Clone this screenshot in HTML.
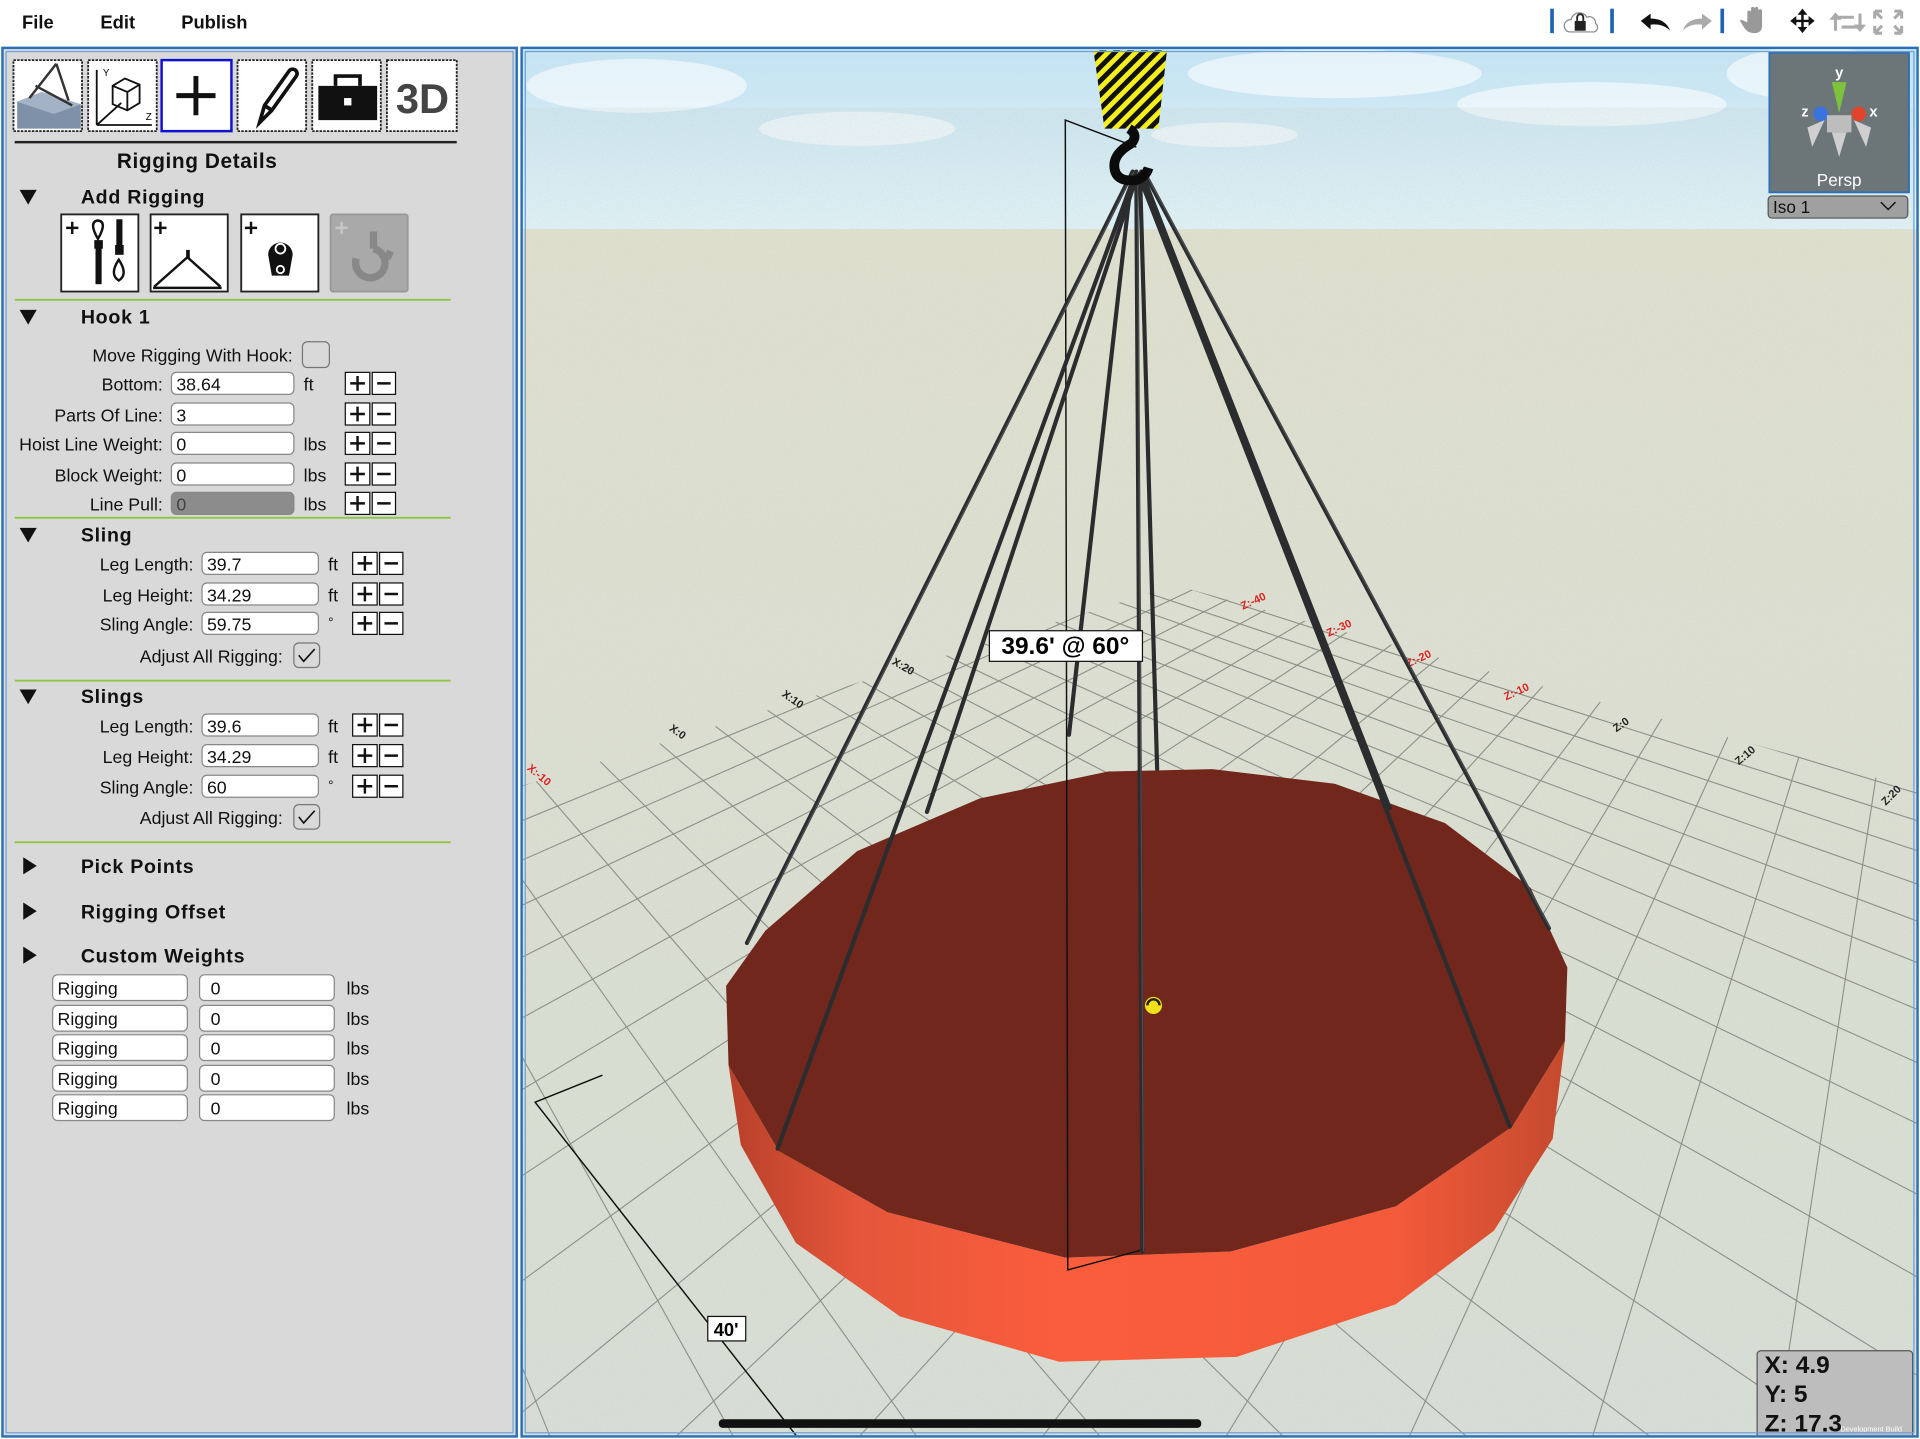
<!DOCTYPE html>
<html><head><meta charset="utf-8"><style>
html,body{margin:0;padding:0;background:#fff;overflow:hidden}
svg{display:block}
text{font-family:"Liberation Sans",Arial,sans-serif}
</style></head><body>
<svg width="1920" height="1439" viewBox="0 0 1568 1175" xmlns="http://www.w3.org/2000/svg">
<defs>
<linearGradient id="sky" x1="0" y1="0" x2="0" y2="1">
<stop offset="0" stop-color="#c4e2f1"/><stop offset="1" stop-color="#e2f5fb"/></linearGradient>
<linearGradient id="gnd" x1="0" y1="0" x2="0" y2="1">
<stop offset="0" stop-color="#e2e2d0"/><stop offset="0.35" stop-color="#dfe2d4"/><stop offset="1" stop-color="#dae1d8"/></linearGradient>
<linearGradient id="side" x1="0" y1="0" x2="1" y2="0">
<stop offset="0" stop-color="#b8402a"/><stop offset="0.15" stop-color="#e4563a"/><stop offset="0.4" stop-color="#fb5d3c"/><stop offset="0.8" stop-color="#f35a3a"/><stop offset="1" stop-color="#c44a2e"/></linearGradient>
<pattern id="haz" width="8" height="8" patternUnits="userSpaceOnUse" patternTransform="rotate(45)">
<rect width="8" height="8" fill="#f2ef1c"/><rect width="4" height="8" fill="#111"/></pattern>
<clipPath id="vp"><rect x="427" y="40" width="1138" height="1132"/></clipPath>
<clipPath id="gridc"><polygon points="425,642 960,478 1568,645 1568,1175 425,1175"/></clipPath>
<filter id="noise"><feTurbulence type="fractalNoise" baseFrequency="0.8" numOctaves="2" seed="3"/><feColorMatrix type="matrix" values="0 0 0 0 0.5  0 0 0 0 0.52  0 0 0 0 0.45  0 0 0 0.25 0"/></filter>
</defs>

<rect x="0" y="0" width="1568" height="38" fill="#fff"/>
<text x="18" y="23" font-size="15" font-weight="bold" fill="#111">File</text>
<text x="82" y="23" font-size="15" font-weight="bold" fill="#111">Edit</text>
<text x="148" y="23" font-size="15" font-weight="bold" fill="#111">Publish</text>
<g fill="#1f64b4"><rect x="1266" y="7" width="3" height="20"/><rect x="1315" y="7" width="3" height="20"/><rect x="1405" y="7" width="3" height="20"/></g>
<path d="M1282 26 a5 5 0 0 1 1-10 a7 7 0 0 1 13-2 a5 5 0 0 1 7 5 a4 4 0 0 1 -1 7 z" fill="#fff" stroke="#888" stroke-width="1"/>
<rect x="1286" y="17" width="9" height="8" fill="#222"/><path d="M1288 17 v-3 a2.5 2.5 0 0 1 5 0 v3" fill="none" stroke="#222" stroke-width="1.5"/>
<path d="M1340 17 l8 -6 v4 q12 0 16 10 q-6 -6 -16 -5 v4 z" fill="#111"/>
<path d="M1398 17 l-8 -6 v4 q-12 0 -16 10 q6 -6 16 -5 v4 z" fill="#aaa"/>
<path d="M1427 18 v-8 a1.5 1.5 0 0 1 3 0 v6 v-9 a1.5 1.5 0 0 1 3 0 v9 v-9 a1.5 1.5 0 0 1 3 0 v9 v-7 a1.5 1.5 0 0 1 3 0 v12 q0 6 -7 6 q-5 0 -8 -5 l-3 -5 q1 -2 3 0 z" fill="#999"/>
<path d="M1472 7 l4 5 h-3 v4 h4 v-3 l5 4 l-5 4 v-3 h-4 v4 h3 l-4 5 l-4 -5 h3 v-4 h-4 v3 l-5 -4 l5 -4 v3 h4 v-4 h-3 z" fill="#111"/>
<path d="M1499 25 v-11 h15 M1519 11 v11 h-15" fill="none" stroke="#aaa" stroke-width="2.5"/>
<path d="M1494 16 l5 -6 l5 6 z M1514 20 l5 6 l5 -6 z" fill="#aaa"/>
<path d="M1531 9 h6 M1531 9 v6 M1553 9 h-6 M1553 9 v6 M1531 27 h6 M1531 27 v-6 M1553 27 h-6 M1553 27 v-6 M1532 10 l5 5 M1552 10 l-5 5 M1532 26 l5 -5 M1552 26 l-5 -5" stroke="#aaa" stroke-width="2.5" fill="none"/>

<rect x="0" y="37" width="424" height="1138" fill="#fff"/>
<rect x="2" y="39" width="420" height="1134" fill="#d9d9d9" stroke="#2b6fb7" stroke-width="2"/>
<rect x="5" y="42" width="414" height="1128" fill="none" stroke="#6da1d6" stroke-width="1"/>

<g stroke="#222" stroke-width="1.5" stroke-dasharray="2 1" fill="#fff">
<rect x="11" y="49" width="56" height="58"/><rect x="72" y="49" width="56" height="58"/>
<rect x="194" y="49" width="56" height="58"/><rect x="255" y="49" width="56" height="58"/><rect x="316" y="49" width="57" height="58"/>
</g>
<rect x="132" y="49" width="57" height="58" fill="#fff" stroke="#1010d0" stroke-width="2"/>
<path d="M14 105 v-22 l20 -8 l32 10 v20 z" fill="#7f91a8"/><path d="M14 83 l20 -8 l32 10 l-22 8 z" fill="#a3b3c5"/>
<path d="M46 52 l-22 28 M46 52 l10 30 M29 70 l30 16" stroke="#333" stroke-width="2" fill="none"/>
<path d="M79 102 h45 M79 102 v-45 M79 102 l20 -18" stroke="#111" stroke-width="1.5" fill="none"/>
<path d="M92 70 l10 -6 l12 5 v15 l-10 6 l-12 -5 z M92 70 l12 5 l10 -6 M104 75 v15" stroke="#111" stroke-width="1.5" fill="none"/>
<text x="84" y="62" font-size="8">Y</text><text x="119" y="98" font-size="8">Z</text>
<path d="M160 62 v32 M144 78 h32" stroke="#111" stroke-width="4"/>
<path d="M212 100 l4 -14 l20 -28 a3 3 0 0 1 6 4 l-20 28 z M216 86 l6 4" stroke="#111" stroke-width="3" fill="none"/>
<path d="M260 70 h48 v28 h-48 z" fill="#111"/><path d="M274 70 v-8 h20 v8" stroke="#111" stroke-width="3" fill="none"/><rect x="281" y="80" width="6" height="6" fill="#fff"/>
<text x="345" y="92" font-size="34" font-weight="bold" text-anchor="middle" fill="#444">3D</text>
<rect x="12" y="115" width="361" height="2" fill="#222"/>

<text x="161" y="137" font-size="17" font-weight="bold" text-anchor="middle" fill="#111" letter-spacing="0.5">Rigging Details</text>
<g font-size="16" font-weight="bold" fill="#111" letter-spacing="0.6">
<text x="66" y="166">Add Rigging</text><text x="66" y="264">Hook 1</text>
<text x="66" y="442">Sling</text><text x="66" y="574">Slings</text>
<text x="66" y="713">Pick Points</text><text x="66" y="750">Rigging Offset</text><text x="66" y="786">Custom Weights</text>
</g>
<g fill="#111">
<path d="M16 155 h14 l-7 12 z"/><path d="M16 253 h14 l-7 12 z"/><path d="M16 431 h14 l-7 12 z"/><path d="M16 563 h14 l-7 12 z"/>
<path d="M19 700 v14 l11 -7 z"/><path d="M19 737 v14 l11 -7 z"/><path d="M19 773 v14 l11 -7 z"/>
</g>

<rect x="50" y="175" width="63" height="63" fill="#fff" stroke="#222" stroke-width="1.5"/>
<rect x="123" y="175" width="63" height="63" fill="#fff" stroke="#222" stroke-width="1.5"/>
<rect x="197" y="175" width="63" height="63" fill="#fff" stroke="#222" stroke-width="1.5"/>
<rect x="270" y="175" width="63" height="63" fill="#a9a9a9" stroke="#999" stroke-width="1.5" rx="2"/>
<g stroke="#111" stroke-width="2" fill="none">
<path d="M54 186 h10 M59 181 v10 M126 186 h10 M131 181 v10 M200 186 h10 M205 181 v10"/>
<path d="M80 195 q-8 -14 0 -15 q8 1 0 15 z"/>
<path d="M97 212 q-8 12 0 17 q8 -5 0 -17 z"/>
<path d="M126 234 l27 -24 l27 24 M125 235 h56"/>
</g>
<g fill="#111"><rect x="78" y="199" width="5" height="33"/><rect x="95" y="179" width="5" height="22"/><rect x="94" y="200" width="7" height="8"/><rect x="77" y="196" width="7" height="7"/>
<rect x="152" y="204" width="3" height="7"/>
<path d="M219 208 a10 10 0 1 1 20 0 l-3 17 h-14 z"/></g>
<g fill="none" stroke="#fff" stroke-width="1.5"><circle cx="229" cy="203" r="4"/><circle cx="229" cy="220" r="3"/></g>
<path d="M274 186 h10 M279 181 v10" stroke="#c6c6c6" stroke-width="2"/>
<path d="M305 189 v14 M305 203 a12 12 0 1 1 -14 8 M316 211 l3 -6" stroke="#888" stroke-width="6" fill="none"/>

<g fill="#8ec63f"><rect x="12" y="244" width="356" height="1.5"/><rect x="12" y="422" width="356" height="1.5"/><rect x="12" y="555" width="356" height="1.5"/><rect x="12" y="687" width="356" height="1.5"/></g>

<g font-size="14.5" fill="#111">
<text x="239" y="295" text-anchor="end">Move Rigging With Hook:</text>
<rect x="247" y="279" width="22" height="21" rx="4" fill="#d9d9d9" stroke="#777"/>
<g text-anchor="end">
<text x="133" y="319">Bottom:</text><text x="133" y="344">Parts Of Line:</text><text x="133" y="368">Hoist Line Weight:</text><text x="133" y="393">Block Weight:</text><text x="133" y="417">Line Pull:</text>
</g>
<g fill="#fff" stroke="#888"><rect x="140" y="304" width="100" height="18" rx="4"/><rect x="140" y="329" width="100" height="18" rx="4"/><rect x="140" y="353" width="100" height="18" rx="4"/><rect x="140" y="378" width="100" height="18" rx="4"/></g>
<rect x="140" y="402" width="100" height="18" rx="4" fill="#8c8c8c" stroke="#888"/>
<text x="144" y="319">38.64</text><text x="144" y="344">3</text><text x="144" y="368">0</text><text x="144" y="393">0</text><text x="144" y="417" fill="#444">0</text>
<text x="248" y="319">ft</text><text x="248" y="368">lbs</text><text x="248" y="393">lbs</text><text x="248" y="417">lbs</text>

<g text-anchor="end">
<text x="158" y="466">Leg Length:</text><text x="158" y="491">Leg Height:</text><text x="158" y="515">Sling Angle:</text><text x="231" y="541">Adjust All Rigging:</text>
<text x="158" y="598">Leg Length:</text><text x="158" y="623">Leg Height:</text><text x="158" y="648">Sling Angle:</text><text x="231" y="673">Adjust All Rigging:</text>
</g>
<g fill="#fff" stroke="#888"><rect x="165" y="451" width="95" height="18" rx="4"/><rect x="165" y="476" width="95" height="18" rx="4"/><rect x="165" y="500" width="95" height="18" rx="4"/>
<rect x="165" y="583" width="95" height="18" rx="4"/><rect x="165" y="608" width="95" height="18" rx="4"/><rect x="165" y="633" width="95" height="18" rx="4"/></g>
<text x="169" y="466">39.7</text><text x="169" y="491">34.29</text><text x="169" y="515">59.75</text>
<text x="169" y="598">39.6</text><text x="169" y="623">34.29</text><text x="169" y="648">60</text>
<text x="268" y="466">ft</text><text x="268" y="491">ft</text><text x="268" y="512" font-size="11">°</text>
<text x="268" y="598">ft</text><text x="268" y="623">ft</text><text x="268" y="645" font-size="11">°</text>
<g fill="#d9d9d9" stroke="#777"><rect x="240" y="525" width="21" height="20" rx="4"/><rect x="240" y="657" width="21" height="20" rx="4"/></g>
<path d="M244 535 l4 5 l9 -10 M244 667 l4 5 l9 -10" stroke="#111" stroke-width="1.3" fill="none"/>

<g fill="#fff" stroke="#888"><rect x="43" y="796" width="110" height="21" rx="4"/><rect x="43" y="821" width="110" height="21" rx="4"/><rect x="43" y="845" width="110" height="21" rx="4"/><rect x="43" y="870" width="110" height="21" rx="4"/><rect x="43" y="894" width="110" height="21" rx="4"/>
<rect x="163" y="796" width="110" height="21" rx="4"/><rect x="163" y="821" width="110" height="21" rx="4"/><rect x="163" y="845" width="110" height="21" rx="4"/><rect x="163" y="870" width="110" height="21" rx="4"/><rect x="163" y="894" width="110" height="21" rx="4"/></g>
<g><text x="47" y="812">Rigging</text><text x="47" y="837">Rigging</text><text x="47" y="861">Rigging</text><text x="47" y="886">Rigging</text><text x="47" y="910">Rigging</text>
<text x="172" y="812">0</text><text x="172" y="837">0</text><text x="172" y="861">0</text><text x="172" y="886">0</text><text x="172" y="910">0</text>
<text x="283" y="812">lbs</text><text x="283" y="837">lbs</text><text x="283" y="861">lbs</text><text x="283" y="886">lbs</text><text x="283" y="910">lbs</text></g>
</g>
<g fill="#fff" stroke="#111" stroke-width="1">
<rect x="282" y="304" width="20" height="18"/><rect x="304" y="304" width="19" height="18"/>
<rect x="282" y="329" width="20" height="18"/><rect x="304" y="329" width="19" height="18"/>
<rect x="282" y="353" width="20" height="18"/><rect x="304" y="353" width="19" height="18"/>
<rect x="282" y="378" width="20" height="18"/><rect x="304" y="378" width="19" height="18"/>
<rect x="282" y="402" width="20" height="18"/><rect x="304" y="402" width="19" height="18"/>
<rect x="288" y="451" width="20" height="18"/><rect x="310" y="451" width="19" height="18"/>
<rect x="288" y="476" width="20" height="18"/><rect x="310" y="476" width="19" height="18"/>
<rect x="288" y="500" width="20" height="18"/><rect x="310" y="500" width="19" height="18"/>
<rect x="288" y="583" width="20" height="18"/><rect x="310" y="583" width="19" height="18"/>
<rect x="288" y="608" width="20" height="18"/><rect x="310" y="608" width="19" height="18"/>
<rect x="288" y="633" width="20" height="18"/><rect x="310" y="633" width="19" height="18"/>
</g>
<g stroke="#111" stroke-width="2">
<path d="M286 313 h12 M292 307 v12 M308 313 h11 M286 338 h12 M292 332 v12 M308 338 h11 M286 362 h12 M292 356 v12 M308 362 h11 M286 387 h12 M292 381 v12 M308 387 h11 M286 411 h12 M292 405 v12 M308 411 h11"/>
<path d="M292 460 h12 M298 454 v12 M314 460 h11 M292 485 h12 M298 479 v12 M314 485 h11 M292 509 h12 M298 503 v12 M314 509 h11 M292 592 h12 M298 586 v12 M314 592 h11 M292 617 h12 M298 611 v12 M314 617 h11 M292 642 h12 M298 636 v12 M314 642 h11"/>
</g>

<rect x="424" y="37" width="1144" height="1138" fill="#fff"/>
<g clip-path="url(#vp)">
<rect x="425" y="38" width="1143" height="150" fill="url(#sky)"/>
<g fill="#fff" opacity="0.55"><ellipse cx="520" cy="70" rx="90" ry="22"/><ellipse cx="700" cy="105" rx="80" ry="14"/><ellipse cx="1090" cy="60" rx="120" ry="20"/><ellipse cx="1300" cy="85" rx="110" ry="18"/><ellipse cx="1480" cy="60" rx="70" ry="22"/><ellipse cx="1000" cy="110" rx="60" ry="10"/></g>
<rect x="425" y="187" width="1143" height="990" fill="url(#gnd)"/>
<rect x="425" y="187" width="1143" height="990" filter="url(#noise)"/>
<g clip-path="url(#gridc)" stroke="#6c6f68" stroke-width="0.9" opacity="0.7">
<path d="M1600 187 L-2600 1175 M1600 187 L-2450 1175 M1600 187 L-2300 1175 M1600 187 L-2150 1175 M1600 187 L-2000 1175 M1600 187 L-1850 1175 M1600 187 L-1700 1175 M1600 187 L-1550 1175 M1600 187 L-1400 1175 M1600 187 L-1250 1175 M1600 187 L-1100 1175 M1600 187 L-950 1175 M1600 187 L-800 1175 M1600 187 L-650 1175 M1600 187 L-500 1175 M1600 187 L-350 1175 M1600 187 L-200 1175 M1600 187 L-50 1175 M1600 187 L100 1175 M1600 187 L250 1175 M1600 187 L400 1175 M1600 187 L550 1175 M1600 187 L700 1175 M1600 187 L850 1175 M1600 187 L1000 1175 M1600 187 L1150 1175 M1600 187 L1300 1175 M1600 187 L1450 1175 M1600 187 L1600 1175"/>
<path d="M50 187 L300 1175 M50 187 L450 1175 M50 187 L600 1175 M50 187 L750 1175 M50 187 L900 1175 M50 187 L1050 1175 M50 187 L1200 1175 M50 187 L1350 1175 M50 187 L1500 1175 M50 187 L1650 1175 M50 187 L1800 1175 M50 187 L1950 1175 M50 187 L2100 1175 M50 187 L2250 1175 M50 187 L2400 1175 M50 187 L2550 1175 M50 187 L2700 1175 M50 187 L2850 1175 M50 187 L3000 1175 M50 187 L3150 1175 M50 187 L3300 1175 M50 187 L3450 1175 M50 187 L3600 1175 M50 187 L3750 1175 M50 187 L3900 1175 M50 187 L4050 1175 M50 187 L4200 1175 M50 187 L4350 1175 M50 187 L4500 1175"/>
</g>
<g font-size="9" font-weight="bold">
<text x="430" y="628" fill="#d22" transform="rotate(40 430 628)">X:-10</text>
<text x="546" y="596" fill="#222" transform="rotate(35 546 596)">X:0</text>
<text x="638" y="568" fill="#222" transform="rotate(35 638 568)">X:10</text>
<text x="728" y="542" fill="#222" transform="rotate(30 728 542)">X:20</text>
<text x="1015" y="498" fill="#d22" transform="rotate(-25 1015 498)">Z:-40</text>
<text x="1085" y="520" fill="#d22" transform="rotate(-25 1085 520)">Z:-30</text>
<text x="1150" y="545" fill="#d22" transform="rotate(-25 1150 545)">Z:-20</text>
<text x="1230" y="572" fill="#d22" transform="rotate(-25 1230 572)">Z:-10</text>
<text x="1320" y="598" fill="#222" transform="rotate(-35 1320 598)">Z:0</text>
<text x="1420" y="625" fill="#222" transform="rotate(-40 1420 625)">Z:10</text>
<text x="1540" y="658" fill="#222" transform="rotate(-45 1540 658)">Z:20</text>
</g>

<path d="M492 878 L437 900 L650 1172" stroke="#111" stroke-width="1.2" fill="none"/>
<rect x="578" y="1075" width="31" height="20" fill="#fff" stroke="#111"/>
<text x="593" y="1091" font-size="15" font-weight="bold" text-anchor="middle">40'</text>

<polygon points="595,870 636,940 725,990 870,1027 1005,1022 1140,985 1235,920 1278,850 1268,930 1220,1005 1140,1065 1010,1108 865,1112 735,1075 650,1015 605,935" fill="url(#side)"/>
<polygon points="593,805 625,760 700,695 800,652 905,630 990,628 1090,640 1180,672 1250,725 1280,790 1278,850 1235,920 1140,985 1005,1022 870,1027 725,990 636,940 595,870" fill="#71271b"/>

<path d="M928 120 L870 98 L872 1037 L935 1020" stroke="#111" stroke-width="1.2" fill="none"/>

<g stroke="#2a2c2e" stroke-width="3.4" stroke-linecap="round" fill="none">
<path d="M925 140 L610 770"/><path d="M927 142 L635 938"/><path d="M929 142 L757 663"/>
<path d="M924 145 L873 600"/>
<path d="M928 140 L933 1022"/><path d="M931 142 L945 628"/>
<path d="M932 140 L1135 660"/><path d="M934 140 L1265 758"/><path d="M930 143 L1233 920"/>
</g>
<g stroke="#5a5e62" stroke-width="1" fill="none" opacity="0.7">
<path d="M926 140 L611 770"/><path d="M929 140 L934 1022"/><path d="M935 140 L1266 758"/>
</g>

<polygon points="893,41 953,41 946,105 902,105" fill="url(#haz)"/>
<path d="M922 105 q8 5 2 12 q-14 8 -14 18 q0 14 18 12 q8 -3 10 -10" stroke="#0b0b0b" stroke-width="8" fill="none"/>
<circle cx="942" cy="821" r="7" fill="#f0e21a"/><path d="M937 821 a5 5 0 0 1 10 0" stroke="#222" stroke-width="2" fill="none"/>

<rect x="808" y="515" width="125" height="25" fill="#fff" stroke="#111"/>
<text x="870" y="534" font-size="20" font-weight="bold" text-anchor="middle">39.6' @ 60°</text>

<rect x="1445" y="43" width="114" height="114" fill="#6c7578" stroke="#2b6fb7" stroke-width="1.5"/>
<polygon points="1496,67 1508,67 1502,92" fill="#7dc23a"/>
<circle cx="1487" cy="93" r="6" fill="#3a72e0"/><circle cx="1518" cy="93" r="6" fill="#e0452c"/>
<path d="M1490 98 l-14 6 l4 16 z M1514 98 l14 6 l-4 16 z M1496 108 l6 20 l6 -20 z" fill="#cfcfcf"/>
<rect x="1492" y="94" width="20" height="14" fill="#bdbdbd"/>
<text x="1502" y="63" font-size="12" font-weight="bold" fill="#fff" text-anchor="middle">y</text>
<text x="1474" y="95" font-size="12" font-weight="bold" fill="#fff" text-anchor="middle">z</text>
<text x="1530" y="95" font-size="12" font-weight="bold" fill="#fff" text-anchor="middle">x</text>
<text x="1502" y="152" font-size="14" fill="#fff" text-anchor="middle">Persp</text>
<rect x="1444" y="160" width="114" height="18" rx="3" fill="#a0a0a0" stroke="#555"/>
<text x="1448" y="174" font-size="14" fill="#111">Iso 1</text>
<path d="M1536 165 l6 6 l6 -6" stroke="#111" stroke-width="1.2" fill="none"/>

<rect x="1435" y="1103" width="127" height="75" rx="3" fill="#bdbdbd" stroke="#555"/>
<g font-size="20" font-weight="bold" fill="#111"><text x="1441" y="1121">X: 4.9</text><text x="1441" y="1145">Y: 5</text><text x="1441" y="1169">Z: 17.3</text></g>
<text x="1503" y="1169" font-size="6" fill="#fff">Development Build</text>

<rect x="587" y="1159" width="394" height="7" rx="3" fill="#111"/>
</g>
<rect x="426" y="39" width="1140" height="1134" fill="none" stroke="#2b6fb7" stroke-width="2"/>
<rect x="429" y="42" width="1134" height="1128" fill="none" stroke="#6da1d6" stroke-width="1"/>
</svg>
</body></html>
